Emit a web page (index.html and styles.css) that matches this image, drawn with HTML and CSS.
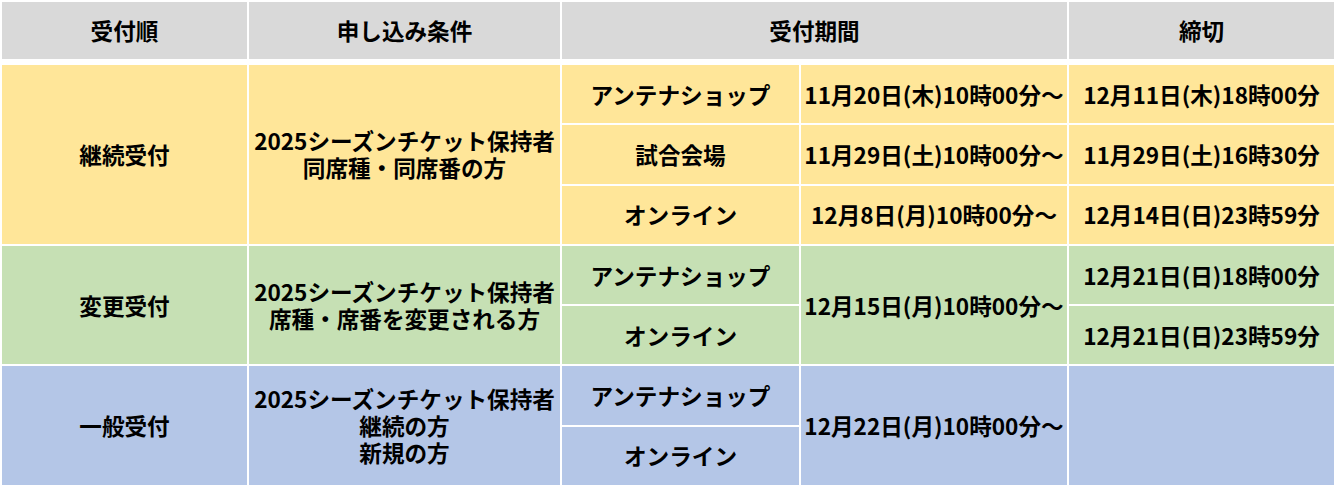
FILE: index.html
```html
<!DOCTYPE html>
<html lang="ja">
<head>
<meta charset="utf-8">
<link rel="stylesheet" href="styles.css">
</head>
<body>
<div class="sheet">
  <div class="head">
    <div class="cell hd">受付順</div>
    <div class="cell hd">申し込み条件</div>
    <div class="cell hd span2">受付期間</div>
    <div class="cell hd">締切</div>
  </div>
  <div class="body">
    <div class="cell y c1 r1-3">継続受付</div>
    <div class="cell y c2 r1-3">2025シーズンチケット保持者<br>同席種・同席番の方</div>
    <div class="cell y c3">アンテナショップ</div>
    <div class="cell y c4">11月20日(木)10時00分～</div>
    <div class="cell y c5">12月11日(木)18時00分</div>
    <div class="cell y c3">試合会場</div>
    <div class="cell y c4">11月29日(土)10時00分～</div>
    <div class="cell y c5">11月29日(土)16時30分</div>
    <div class="cell y c3">オンライン</div>
    <div class="cell y c4">12月8日(月)10時00分～</div>
    <div class="cell y c5">12月14日(日)23時59分</div>

    <div class="cell g c1 r4-5">変更受付</div>
    <div class="cell g c2 r4-5">2025シーズンチケット保持者<br>席種・席番を変更される方</div>
    <div class="cell g c3">アンテナショップ</div>
    <div class="cell g c4 r4-5">12月15日(月)10時00分～</div>
    <div class="cell g c5">12月21日(日)18時00分</div>
    <div class="cell g c3">オンライン</div>
    <div class="cell g c5">12月21日(日)23時59分</div>

    <div class="cell b c1 r6-7">一般受付</div>
    <div class="cell b c2 r6-7">2025シーズンチケット保持者<br>継続の方<br>新規の方</div>
    <div class="cell b c3">アンテナショップ</div>
    <div class="cell b c4 r6-7">12月22日(月)10時00分～</div>
    <div class="cell b c5 r6-7"></div>
    <div class="cell b c3">オンライン</div>
  </div>
</div>
</body>
</html>
```

FILE: styles.css
```css
html, body {
  margin: 0;
  padding: 0;
  background: #ffffff;
}

.sheet {
  padding: 2px 0 0 2px;
  font-family: "Noto Sans CJK JP", "Noto Sans", sans-serif;
  font-weight: 700;
  font-size: 22.6px;
  color: #000000;
}

.head,
.body {
  display: grid;
  grid-template-columns: 245px 311px 237px 266px 265px;
  column-gap: 2px;
  row-gap: 2px;
}

.head {
  grid-template-rows: 57px;
  margin-bottom: 6px;
}

.body {
  grid-template-rows: repeat(7, 58.3px);
  grid-auto-flow: row dense;
}

.cell {
  display: flex;
  align-items: center;
  justify-content: center;
  text-align: center;
  line-height: 27px;
  white-space: nowrap;
}

.hd { background: #d9d9d9; }
.y { background: #ffe699; }
.g { background: #c6e0b4; }
.b { background: #b4c6e7; }

.span2 { grid-column: span 2; }

.c1 { grid-column: 1; }
.c2 { grid-column: 2; }
.c3 { grid-column: 3; }
.c4 { grid-column: 4; }
.c5 { grid-column: 5; }

.r1-3 { grid-row: 1 / span 3; }
.r4-5 { grid-row: 4 / span 2; }
.r6-7 { grid-row: 6 / span 2; }
```
